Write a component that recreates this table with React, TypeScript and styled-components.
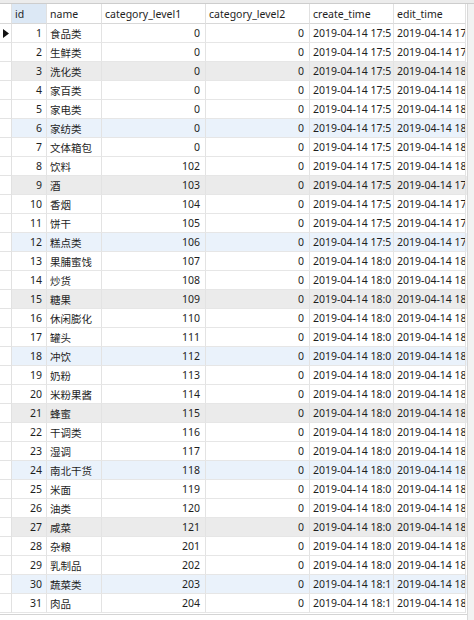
import React from 'react';
import styled, { createGlobalStyle } from 'styled-components';

const Global = createGlobalStyle`
  html, body { margin: 0; padding: 0; background: #ffffff; }
  body { font-family: "Noto Sans", "Noto Sans CJK SC", sans-serif; }
`;

const COLS = '12px 35px 55px 104px 104px 84px 72px';

type Tone = 'plain' | 'gray' | 'blue';
type Align = 'left' | 'right';

const Frame = styled.div`
  width: 474px;
  height: 620px;
  overflow: hidden;
  display: flex;
  flex-direction: column;
  background: #ffffff;
  font-size: 10.5px;
  color: #1e1e1e;
`;

const TopStrip = styled.div`
  flex: none;
  height: 3px;
  background: #ececec;
  border-bottom: 1px solid #cdcdcd;
`;

const Body = styled.div`
  flex: 1;
  min-height: 0;
  display: flex;
`;

const Table = styled.div`
  flex: none;
  width: 467px;
  display: flex;
  flex-direction: column;
`;

const ScrollTrack = styled.div`
  flex: 1;
  background: #f2f2f2;
  border-left: 1px solid #d9d9d9;
`;

const HeaderRow = styled.div`
  display: grid;
  grid-template-columns: ${COLS};
  height: 20px;
  flex: none;
`;

const HeadCell = styled.div<{ $active?: boolean }>`
  box-sizing: border-box;
  display: flex;
  align-items: center;
  padding: 0 3px;
  border-right: 1px solid #e1e1e1;
  border-bottom: 1px solid #d8d8d8;
  background: ${(p) => (p.$active ? '#dce8f5' : '#ffffff')};
  white-space: nowrap;
  overflow: hidden;
  &:first-child { padding: 0; }
`;

const Row = styled.div<{ $tone: Tone }>`
  display: grid;
  grid-template-columns: ${COLS};
  height: 19px;
  flex: none;
  background: ${(p) => (p.$tone === 'gray' ? '#ebebeb' : p.$tone === 'blue' ? '#eaf2fb' : '#ffffff')};
`;

const Indicator = styled.div`
  box-sizing: border-box;
  background: #ffffff;
  border-right: 1px solid #e1e1e1;
  border-bottom: 1px solid #e3e3e3;
  display: flex;
  align-items: center;
  padding-left: 3px;
`;

const Cell = styled.div<{ $align?: Align; $pad?: number }>`
  box-sizing: border-box;
  display: flex;
  align-items: center;
  justify-content: ${(p) => (p.$align === 'right' ? 'flex-end' : 'flex-start')};
  padding: ${(p) => (p.$align === 'right' ? `0 ${p.$pad ?? 4}px 0 0` : `0 0 0 ${p.$pad ?? 3}px`)};
  border-right: 1px solid #e3e3e3;
  border-bottom: 1px solid #e6e6e6;
  white-space: nowrap;
  overflow: hidden;
`;

const Footer = styled.div`
  flex: 1;
  border-top: 1px solid #d4d4d4;
  margin-top: 1px;
  background: #ffffff;
`;

const names = [
  '食品类', '生鲜类', '洗化类', '家百类', '家电类', '家纺类', '文体箱包', '饮料', '酒', '香烟',
  '饼干', '糕点类', '果脯蜜饯', '炒货', '糖果', '休闲膨化', '罐头', '冲饮', '奶粉', '米粉果酱',
  '蜂蜜', '干调类', '湿调', '南北干货', '米面', '油类', '咸菜', '杂粮', '乳制品', '蔬菜类', '肉品',
];

const level1 = (id: number): number => {
  if (id <= 7) return 0;
  if (id <= 27) return 94 + id;
  return 173 + id;
};

const createTime = (id: number): string => {
  if (id <= 12) return '2019-04-14 17:5';
  if (id <= 29) return '2019-04-14 18:0';
  return '2019-04-14 18:1';
};

const editTime = (id: number): string => {
  const early = id <= 2 || (id >= 9 && id <= 12);
  return early ? '2019-04-14 17' : '2019-04-14 18';
};

const tone = (id: number): Tone => (id % 6 === 3 ? 'gray' : id % 6 === 0 ? 'blue' : 'plain');

const Pointer = () => (
  <svg width="6" height="9" viewBox="0 0 6 9">
    <polygon points="0,0 6,4.5 0,9" fill="#111" />
  </svg>
);

export default function App() {
  return (
    <>
      <Global />
      <Frame>
        <TopStrip />
        <Body>
          <Table>
            <HeaderRow>
              <HeadCell />
              <HeadCell $active>id</HeadCell>
              <HeadCell>name</HeadCell>
              <HeadCell>category_level1</HeadCell>
              <HeadCell>category_level2</HeadCell>
              <HeadCell>create_time</HeadCell>
              <HeadCell>edit_time</HeadCell>
            </HeaderRow>
            {names.map((name, i) => {
              const id = i + 1;
              return (
                <Row key={id} $tone={tone(id)}>
                  <Indicator>{id === 1 ? <Pointer /> : null}</Indicator>
                  <Cell $align="right" $pad={4}>{id}</Cell>
                  <Cell>{name}</Cell>
                  <Cell $align="right" $pad={5}>{level1(id)}</Cell>
                  <Cell $align="right" $pad={5}>0</Cell>
                  <Cell $pad={3}>{createTime(id)}</Cell>
                  <Cell $pad={3}>{editTime(id)}</Cell>
                </Row>
              );
            })}
            <Footer />
          </Table>
          <ScrollTrack />
        </Body>
      </Frame>
    </>
  );
}
